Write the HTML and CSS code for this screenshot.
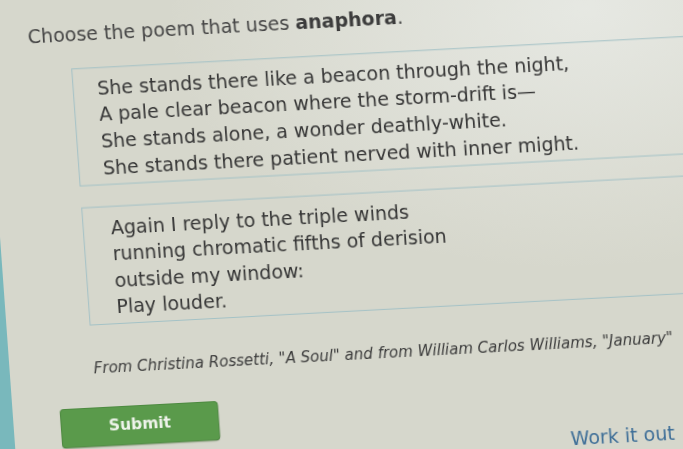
FILE: index.html
```html
<!DOCTYPE html>
<html lang="en">
<head>
<meta charset="utf-8">
<title>Choose the poem that uses anaphora</title>
<link rel="stylesheet" href="styles.css">
</head>
<body>
<div class="page">
  <div class="content">
    <h1 class="question">Choose the poem that uses <b>anaphora</b>.</h1>
    <div class="options">
      <div class="option">
        <div class="line">She stands there like a beacon through the night,</div>
        <div class="line">A pale clear beacon where the storm-drift is—</div>
        <div class="line">She stands alone, a wonder deathly-white.</div>
        <div class="line">She stands there patient nerved with inner might.</div>
      </div>
      <div class="option option-second">
        <div class="line">Again I reply to the triple winds</div>
        <div class="line">running chromatic fifths of derision</div>
        <div class="line">outside my window:</div>
        <div class="line">Play louder.</div>
      </div>
    </div>
    <p class="citation">From Christina Rossetti, "A Soul" and from William Carlos Williams, "January"</p>
    <button class="submit" type="button">Submit</button>
    <div class="footer"><a class="work-it-out" href="#">Work it out</a></div>
  </div>
</div>
</body>
</html>
```

FILE: styles.css
```css
html, body {
  margin: 0;
  padding: 0;
  width: 683px;
  height: 449px;
  overflow: hidden;
  background: #79b8bc;
}

.page {
  box-sizing: border-box;
  margin: -20px 0 0 -17px;
  padding: 20px 0 0 17px;
  width: 745px;
  height: 540px;
  background:
    radial-gradient(ellipse 420px 260px at 600px 60px, rgba(232, 234, 229, 0.9), rgba(232, 234, 229, 0) 100%),
    #d6d7cc;
  transform: matrix(1, -0.053, 0.072, 1, 0, 0);
  transform-origin: 17px 20px;
  font-family: "DejaVu Sans", Verdana, sans-serif;
  color: #3a3a3a;
  filter: blur(0.45px);
}

.content {
  padding: 26px 0 0 25px;
}

.question {
  margin: 0;
  font-size: 19px;
  font-weight: normal;
  line-height: 24px;
  color: #454545;
}

.question b {
  font-weight: bold;
  color: #3c3c3c;
}

.options {
  margin: 21.5px 0 0 41px;
  display: flex;
  flex-direction: column;
  gap: 21px;
}

.option {
  border: 1.5px solid #a4c2c6;
  padding: 7px 24px 3px 23.5px;
  font-size: 19px;
  line-height: 26.5px;
  color: #363636;
}

.option-second {
  padding-left: 27px;
}

.line {
  white-space: nowrap;
}

.citation {
  margin: 33.3px 0 0 42px;
  font-size: 15px;
  font-style: italic;
  line-height: 20px;
  color: #3c3c3c;
  white-space: nowrap;
}

.submit {
  display: block;
  box-sizing: border-box;
  margin: 29px 0 0 5px;
  width: 158px;
  height: 39px;
  padding: 0;
  background: #5a9a4b;
  border: 1px solid #4d8a40;
  border-radius: 4px;
  box-shadow: 0 1px 1px rgba(60, 90, 50, 0.35);
  font-family: "DejaVu Sans", Verdana, sans-serif;
  font-size: 15.5px;
  font-weight: bold;
  color: #eef3ea;
}

.footer {
  display: flex;
  justify-content: flex-end;
  width: 616px;
  margin-top: 5.4px;
  line-height: 24px;
}

.work-it-out {
  font-size: 19px;
  color: #3f6f98;
  text-decoration: none;
}
```
